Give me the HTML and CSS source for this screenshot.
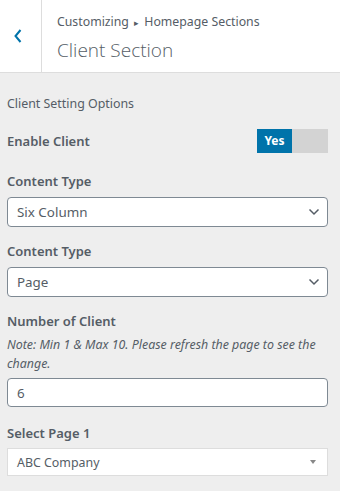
FILE: index.html
```html
<!DOCTYPE html>
<html lang="en">
<head>
    <meta charset="UTF-8">
    <meta name="viewport" content="width=device-width, initial-scale=1.0">
    <title>Client Section</title>
    <link rel="stylesheet" href="styles.css">
</head>
<body>
    <div class="panel-header">
        <button class="back-btn" aria-label="Back">
            <svg width="10" height="16" viewBox="0 0 10 16"><path d="M7.5 2 L2.5 8 L7.5 14" fill="none" stroke="#0073aa" stroke-width="2"/></svg>
        </button>
        <div class="panel-title">
            <div class="crumbs">Customizing <span class="sep">&#9656;</span> Homepage Sections</div>
            <h2>Client Section</h2>
        </div>
    </div>

    <div class="panel-body">
        <div class="group-title">Client Setting Options</div>

        <div class="toggle-row">
            <span class="label">Enable Client</span>
            <div class="toggle">
                <span class="toggle-on">Yes</span>
                <span class="toggle-off"></span>
            </div>
        </div>

        <div class="control first">
            <span class="label">Content Type</span>
            <div class="select-box">
                <span>Six Column</span>
                <svg width="12" height="8" viewBox="0 0 12 8"><path d="M1.5 1.5 L6 6 L10.5 1.5" fill="none" stroke="#555d66" stroke-width="1.5"/></svg>
            </div>
        </div>

        <div class="control">
            <span class="label">Content Type</span>
            <div class="select-box">
                <span>Page</span>
                <svg width="12" height="8" viewBox="0 0 12 8"><path d="M1.5 1.5 L6 6 L10.5 1.5" fill="none" stroke="#555d66" stroke-width="1.5"/></svg>
            </div>
        </div>

        <div class="control">
            <span class="label">Number of Client</span>
            <p class="note">Note: Min 1 &amp; Max 10. Please refresh the page to see the change.</p>
            <div class="text-box">6</div>
        </div>

        <div class="control last">
            <span class="label">Select Page 1</span>
            <div class="plain-select">
                <span>ABC Company</span>
                <svg width="6" height="4" viewBox="0 0 6 4"><path d="M0 0 L6 0 L3 4 Z" fill="#888"/></svg>
            </div>
        </div>
    </div>
</body>
</html>
```

FILE: styles.css
```css
body {
    margin: 0;
    background: #eee;
    font-family: "Noto Sans", "Open Sans", sans-serif;
    color: #555d66;
    font-size: 12.4px;
}
.panel-header {
    display: flex;
    height: 72px;
    background: #fff;
    border-bottom: 1px solid #ddd;
}
.back-btn {
    width: 42px;
    height: 72px;
    padding: 0 5px 0 0;
    border: 0;
    border-right: 1px solid #ddd;
    background: #fff;
    display: flex;
    align-items: center;
    justify-content: center;
}
.panel-title {
    padding: 13px 0 0 15px;
}
.crumbs {
    font-size: 12.3px;
    line-height: 18px;
}
.crumbs .sep {
    font-size: 9px;
    margin: 0 2px;
}
.panel-title h2 {
    margin: 5px 0 0;
    font-family: "Open Sans", "Noto Sans", sans-serif;
    font-size: 19px;
    font-weight: 300;
    line-height: 26px;
    color: #555d66;
}
.panel-body {
    padding: 22px 12px 0 7px;
}
.group-title {
    line-height: 18px;
}
.label {
    display: block;
    font-size: 13px;
    font-weight: 600;
    line-height: 20px;
}
.toggle-row {
    display: flex;
    justify-content: space-between;
    align-items: center;
    margin-top: 16px;
    height: 24px;
}
.toggle {
    display: flex;
    width: 71px;
    height: 24px;
}
.toggle-on {
    width: 35px;
    background: #0073aa;
    color: #fff;
    font-weight: 700;
    font-size: 12px;
    line-height: 24px;
    text-align: center;
}
.toggle-off {
    flex: 1;
    background: #d3d3d3;
}
.control {
    margin-top: 14px;
}
.control.first {
    margin-top: 18px;
}
.control.last {
    margin-top: 16px;
}
.select-box, .text-box {
    margin-top: 6px;
    height: 30px;
    box-sizing: border-box;
    background: #fff;
    border: 1px solid #7e8993;
    border-radius: 4px;
    padding: 0 7px 0 9px;
    display: flex;
    align-items: center;
    justify-content: space-between;
    font-size: 13.4px;
}
.note {
    margin: 4px 0 0;
    font-style: italic;
    line-height: 19px;
}
.text-box {
    margin-top: 5px;
    height: 29px;
}
.plain-select {
    margin-top: 5px;
    height: 28px;
    box-sizing: border-box;
    background: #fff;
    border: 1px solid #ddd;
    padding: 0 11px 0 9px;
    display: flex;
    align-items: center;
    justify-content: space-between;
}
```
